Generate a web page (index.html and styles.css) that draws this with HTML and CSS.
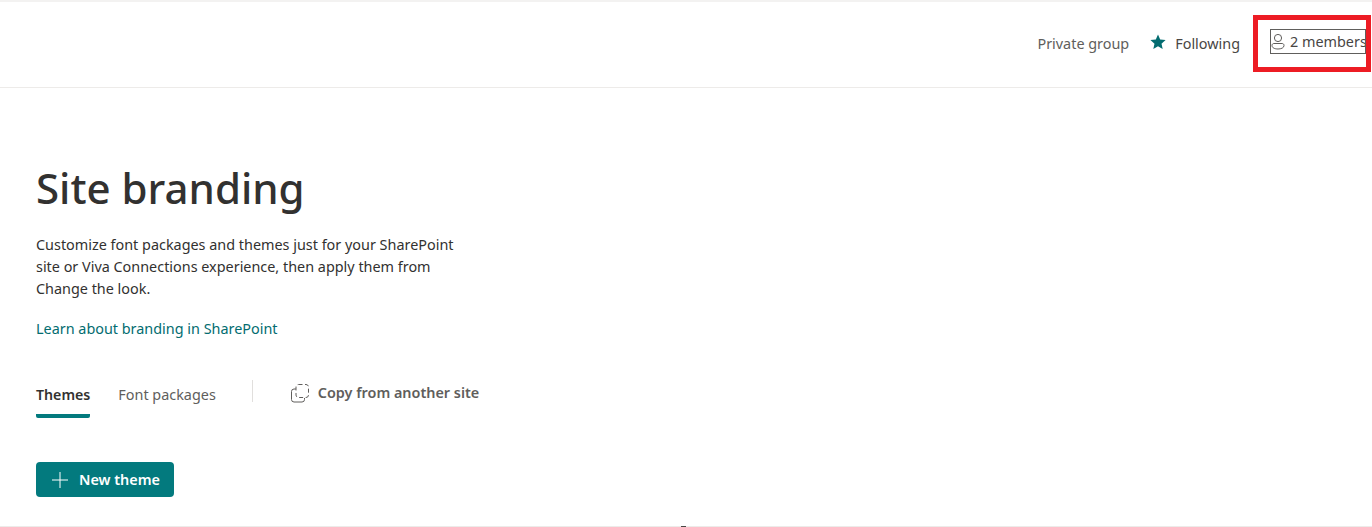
FILE: index.html
```html
<!DOCTYPE html>
<html lang="en">
<head>
    <meta charset="UTF-8">
    <title>Site branding</title>
    <link rel="stylesheet" href="styles.css">
</head>
<body>
    <header class="site-header">
        <span class="privacy">Private group</span>
        <span class="following">
            <svg class="star" width="16" height="16" viewBox="0 0 16 16"><path d="M8 .6l2.200 5 5.400.5-4.100 3.600 1.200 5.300L8 12.200 3.300 15l1.200-5.300L.4 6.100l5.400-.5z"/></svg>
            Following
        </span>
        <span class="members">
            <svg width="14" height="18" viewBox="0 0 14 18" fill="none" stroke="#605e5c"><circle cx="7" cy="5" r="3.600"/><path d="M1 12.500C1 11 2 10.500 3 10.500h8c1 0 2 .5 2 2 0 2.500-3 3.500-6 3.500s-6-1-6-3.500z"/></svg>
            2 members
        </span>
        <div class="callout"></div>
    </header>
    <main class="content">
        <h1>Site branding</h1>
        <p class="intro">Customize font packages and themes just for your SharePoint site or Viva Connections experience, then apply them from Change the look.</p>
        <a class="learn" href="#">Learn about branding in SharePoint</a>
        <div class="tabs">
            <span class="tab active">Themes</span>
            <span class="tab">Font packages</span>
            <span class="tab-sep"></span>
            <span class="copy">
                <svg width="18" height="19" viewBox="0 0 18 19" fill="none" stroke="#605e5c"><path d="M5 5H3a2.500 2.500 0 0 0-2.500 2.500v8A2.500 2.500 0 0 0 3 18h8a2.500 2.500 0 0 0 2.500-2.500V14"/><rect x="5" y=".5" width="12.500" height="13" rx="2.500" stroke-dasharray="4 2.500"/></svg>
                Copy from another site
            </span>
        </div>
        <button class="new-theme">
            <svg width="16" height="16" viewBox="0 0 16 16" stroke="#fff"><path d="M8 0v16M0 8h16"/></svg>
            New theme
        </button>
    </main>
    <footer class="page-end"><span class="end-mark"></span></footer>
</body>
</html>
```

FILE: styles.css
```css
html, body {
    height: 100%;
}
body {
    margin: 0;
    font-family: "Noto Sans", "Open Sans", Arial, sans-serif;
    background-color: #fff;
    color: #323130;
    overflow: hidden;
    display: flex;
    flex-direction: column;
}
.site-header {
    position: relative;
    height: 88px;
    box-sizing: border-box;
    border-top: 2px solid #f3f2f1;
    border-bottom: 1px solid #edebe9;
    display: flex;
    align-items: center;
    justify-content: flex-end;
    padding-right: 6px;
    padding-bottom: 2px;
    font-size: 14.4px;
    line-height: 20px;
    color: #605e5c;
    flex-shrink: 0;
}
.privacy {
    margin-right: 21px;
}
.following {
    display: flex;
    align-items: center;
    gap: 9px;
    color: #484644;
    margin-right: 30px;
}
.star {
    fill: #036c70;
    margin-bottom: 4px;
}
.members {
    width: 96px;
    height: 25px;
    border: 1px solid #605e5c;
    box-sizing: border-box;
    display: flex;
    align-items: center;
    gap: 5px;
    color: #484644;
    white-space: nowrap;
    overflow: hidden;
    margin-top: -4px;
}
.members svg {
    flex-shrink: 0;
}
.callout {
    position: absolute;
    left: 1253px;
    top: 13px;
    width: 118px;
    height: 57px;
    border: 5px solid #ed1c24;
    box-sizing: border-box;
}
.content {
    flex: 1;
    padding: 0 36px;
}
h1 {
    margin: 72px 0 0;
    font-size: 42px;
    line-height: 56px;
    font-weight: 500;
}
.intro {
    width: 430px;
    margin: 18px 0 0;
    font-size: 14.4px;
    line-height: 22px;
}
.learn {
    display: block;
    margin-top: 18px;
    font-size: 14.4px;
    line-height: 22px;
    color: #036c70;
    text-decoration: none;
}
.tabs {
    display: flex;
    align-items: center;
    margin-top: 40px;
    font-size: 14.4px;
    line-height: 20px;
}
.tab {
    margin-right: 28px;
    padding: 3px 0 9px;
    border-bottom: 4px solid transparent;
    color: #605e5c;
}
.tab.active {
    font-size: 14.2px;
    font-weight: 600;
    color: #323130;
    border-color: #037a7e;
    border-radius: 2px;
}
.tab-sep {
    width: 1px;
    height: 22px;
    margin: 0 38px 18px 8px;
    background-color: #e1dfdd;
}
.copy {
    display: flex;
    align-items: center;
    gap: 9px;
    margin-bottom: 14px;
    font-weight: 600;
    color: #605e5c;
}
.new-theme {
    display: flex;
    align-items: center;
    gap: 11px;
    height: 35px;
    margin-top: 42px;
    padding: 0 14px 0 16px;
    border: none;
    border-radius: 4px;
    background-color: #037a7e;
    color: #fff;
    font-family: inherit;
    font-size: 14.4px;
    font-weight: 600;
}
.page-end {
    position: relative;
    height: 1px;
    background-color: #edebe9;
    flex-shrink: 0;
}
.end-mark {
    position: absolute;
    left: 681px;
    top: 0;
    width: 5px;
    height: 1px;
    background-color: #484644;
}
```
